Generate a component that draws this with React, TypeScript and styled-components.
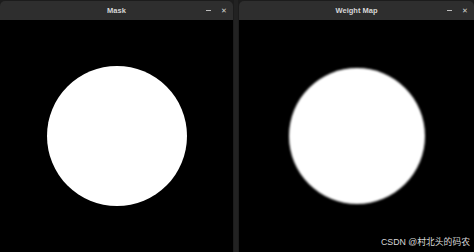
import styled, { createGlobalStyle } from "styled-components";

const GlobalStyle = createGlobalStyle`
  html, body {
    margin: 0;
    padding: 0;
    background: #000;
  }
  #root {
    width: 474px;
    height: 252px;
  }
`;

const Desktop = styled.div`
  position: relative;
  width: 474px;
  height: 252px;
  display: flex;
  background: #1c1c1c;
  overflow: hidden;
  font-family: "Liberation Sans", "Noto Sans CJK SC", sans-serif;
`;

const Window = styled.div<{ $width: number }>`
  width: ${(p) => p.$width}px;
  display: flex;
  flex-direction: column;
  padding-top: 1px;
`;

const TitleBar = styled.div`
  height: 19px;
  flex: none;
  display: flex;
  align-items: center;
  position: relative;
  justify-content: center;
  background: #2e2e2e;
  border-radius: 5px 5px 0 0;
  color: #d6d6d6;
  font-size: 7.5px;
  font-weight: bold;
`;

const Controls = styled.div`
  position: absolute;
  right: 6px;
  top: 0;
  height: 100%;
  display: flex;
  align-items: center;
  gap: 10px;
`;

const Minimize = styled.span`
  width: 5px;
  height: 1px;
  background: #bdbdbd;
`;

const Close = styled.span`
  color: #d0d0d0;
  font-size: 7px;
  font-weight: normal;
  line-height: 1;
`;

const Body = styled.div`
  flex: 1;
  background: #000;
  display: flex;
  align-items: center;
  justify-content: center;
`;

const Divider = styled.div`
  width: 4px;
  background: #222;
  margin-left: 1px;
  margin-right: 1px;
`;

const Disc = styled.div<{ $size: number; $soft?: boolean }>`
  width: ${(p) => p.$size}px;
  height: ${(p) => p.$size}px;
  border-radius: 50%;
  background: #fff;
  filter: ${(p) => (p.$soft ? "blur(1.2px)" : "none")};
`;

const Watermark = styled.div`
  position: absolute;
  right: 4px;
  bottom: 4px;
  color: #d8d8d8;
  font-size: 8.8px;
  font-family: "Liberation Sans", "Noto Sans CJK SC", sans-serif;
`;

export default function App() {
  return (
    <>
      <GlobalStyle />
      <Desktop>
        <Window $width={233}>
          <TitleBar>
            Mask
            <Controls>
              <Minimize />
              <Close>✕</Close>
            </Controls>
          </TitleBar>
          <Body>
            <Disc $size={140} />
          </Body>
        </Window>
        <Divider />
        <Window $width={235}>
          <TitleBar>
            Weight Map
            <Controls>
              <Minimize />
              <Close>✕</Close>
            </Controls>
          </TitleBar>
          <Body>
            <Disc $size={136} $soft />
          </Body>
        </Window>
        <Watermark>CSDN @村北头的码农</Watermark>
      </Desktop>
    </>
  );
}
